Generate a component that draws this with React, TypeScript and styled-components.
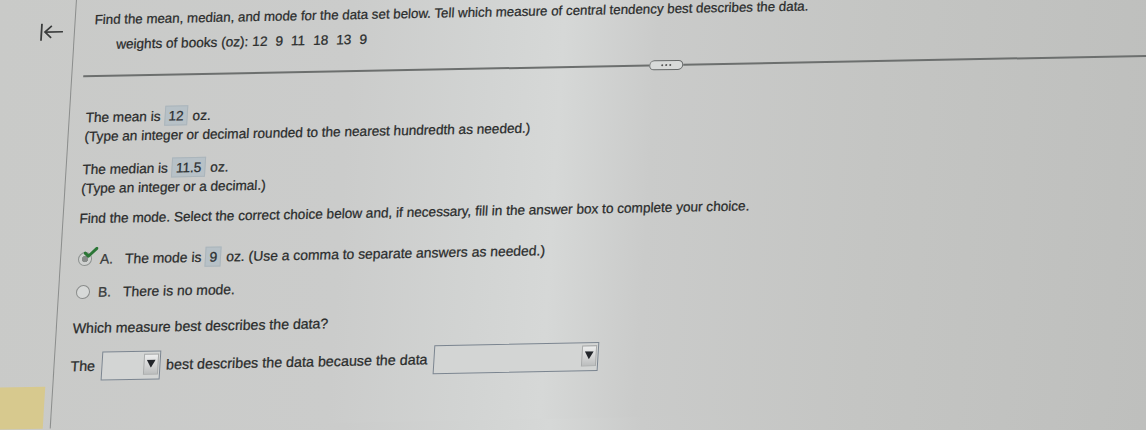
import styled, { createGlobalStyle, css } from "styled-components";

const screenGlare = css`
  background: linear-gradient(
    90deg,
    #c9cac8 0%,
    #cbcccb 30%,
    #d2d4d3 42%,
    #d6d8d7 48%,
    #cacbca 56%,
    #c4c5c3 75%,
    #bebfbd 100%
  );
`;

const GlobalStyle = createGlobalStyle`
  html, body {
    margin: 0;
    padding: 0;
    overflow: hidden;
    height: 100%;
    ${screenGlare}
  }
  body {
    font-family: "Liberation Sans", Arial, Helvetica, sans-serif;
    color: #2a2c2c;
  }
`;

// the reference is a photo of a monitor, so the whole screen is tilted a little
const Screen = styled.div`
  display: flex;
  width: 1180px;
  height: 430px;
  transform: skew(-3.5deg, -1.1deg);
  transform-origin: 0 0;
  font-size: 13.6px;
  -webkit-text-stroke: 0.25px currentColor;
  ${screenGlare}
`;

const Sidebar = styled.aside`
  width: 76px;
  flex-shrink: 0;
  display: flex;
  flex-direction: column;
  border-right: 1px solid #8b8d8c;
`;

const BackButton = styled.button`
  appearance: none;
  border: 0;
  background: none;
  padding: 0;
  margin: 24px 0 0 42px;
  width: 24px;
  height: 18px;
  color: #3a3c3c;
  display: flex;
  cursor: pointer;
`;

const YellowTab = styled.div`
  margin-top: auto;
  width: 69px;
  height: 42px;
  background: #d7c98e;
`;

const Main = styled.main`
  flex: 1;
  display: flex;
  flex-direction: column;
  padding-top: 14px;
`;

const Title = styled.p`
  margin: 0;
  padding-left: 19px;
  line-height: 16px;
  white-space: nowrap;
  font-size: 13.3px;
`;

const DataLine = styled.p`
  margin: 9px 0 0;
  padding-left: 42px;
  line-height: 16px;
  display: flex;
  align-items: center;
`;

const DataValues = styled.span`
  display: inline-flex;
  gap: 8px;
  margin-left: 4px;
`;

const Divider = styled.div`
  margin: 18px 0 0 11px;
  height: 10px;
  display: flex;
  align-items: center;
`;

const Rule = styled.div<{ $width?: number }>`
  height: 1.5px;
  background: #6c6f6e;
  flex: ${(p) => (p.$width ? `0 0 ${p.$width}px` : "1")};
`;

const MorePill = styled.button`
  appearance: none;
  width: 34px;
  height: 10px;
  padding: 0;
  border: 1.5px solid #676a6a;
  border-radius: 5px;
  background: #d8dad9;
  display: flex;
  align-items: center;
  justify-content: center;
  gap: 2px;
  box-sizing: border-box;
`;

const Dot = styled.span`
  width: 2px;
  height: 2px;
  border-radius: 50%;
  background: #555;
`;

const Content = styled.section`
  padding-left: 16px;
  display: flex;
  flex-direction: column;
`;

// text nearer the bottom of the photo is a touch larger (closer to the camera)
const Line = styled.div<{ $mt?: number; $near?: boolean }>`
  margin-top: ${(p) => p.$mt ?? 0}px;
  height: 14px;
  display: flex;
  align-items: center;
  white-space: nowrap;
  font-size: ${(p) => (p.$near ? "14.1px" : "inherit")};
`;

const AnswerBox = styled.span`
  display: inline-flex;
  align-items: center;
  justify-content: center;
  height: 20px;
  padding: 0 3px;
  margin: 0 5px 0 4px;
  box-sizing: border-box;
  background: #b7c1c7;
  border: 1px solid #abb5bb;
  color: #2c2f31;
`;

const OptionRow = styled.div<{ $mt: number }>`
  margin-top: ${(p) => p.$mt}px;
  height: 20px;
  display: flex;
  align-items: center;
  white-space: nowrap;
  font-size: 13.9px;
`;

const RadioWrap = styled.span`
  position: relative;
  width: 14px;
  height: 14px;
  margin: 0 8px 0 1px;
  flex-shrink: 0;
`;

const Radio = styled.span<{ $checked?: boolean }>`
  display: block;
  width: 14px;
  height: 14px;
  box-sizing: border-box;
  border-radius: 50%;
  border: 1.6px solid ${(p) => (p.$checked ? "#8e9290" : "#8a8c8b")};
  background: ${(p) =>
    p.$checked
      ? "radial-gradient(circle, #878b89 0 3px, #d0d2d1 3.5px)"
      : "#d7d9d8"};
`;

const CheckMark = styled.svg`
  position: absolute;
  left: 5px;
  top: -5px;
  width: 15px;
  height: 11px;
`;

const Letter = styled.span`
  width: 25px;
  color: #3a3c3c;
`;

const SentenceRow = styled.div`
  margin-top: 16px;
  height: 30px;
  display: flex;
  align-items: center;
  white-space: nowrap;
  font-size: 14.3px;
`;

const Select = styled.div<{ $width: number }>`
  width: ${(p) => p.$width}px;
  height: 29px;
  margin: 0 6px;
  box-sizing: border-box;
  border: 1.6px solid #7b8590;
  background: #d3d5d4;
  display: flex;
  justify-content: flex-end;
  align-items: flex-start;
  padding: 2px 1px 0 0;
`;

const SelectButton = styled.span`
  width: 15px;
  height: 21px;
  box-sizing: border-box;
  border: 1px solid #a9abab;
  background: linear-gradient(180deg, #eceded 0%, #d2d3d3 60%, #bcbebe 100%);
  display: flex;
  align-items: center;
  justify-content: center;
`;

const BackIcon = () => (
  <svg width="24" height="18" viewBox="0 0 24 18" fill="none">
    <path d="M1.5 0.5V17.5" stroke="currentColor" strokeWidth="1.8" />
    <path d="M23 9H5.5" stroke="currentColor" strokeWidth="1.7" />
    <path d="M11.5 3L5 9L11.5 15" stroke="currentColor" strokeWidth="1.7" />
  </svg>
);

const Caret = () => (
  <svg width="9" height="8" viewBox="0 0 9 8">
    <polygon points="0,0 9,0 4.5,8" fill="#23262b" />
  </svg>
);

const DropDown = ({ width }: { width: number }) => (
  <Select $width={width}>
    <SelectButton>
      <Caret />
    </SelectButton>
  </Select>
);

const weights = [12, 9, 11, 18, 13, 9];

export default function App() {
  return (
    <>
      <GlobalStyle />
      <Screen>
        <Sidebar>
          <BackButton type="button" aria-label="Back">
            <BackIcon />
          </BackButton>
          <YellowTab />
        </Sidebar>
        <Main>
          <Title>
            Find the mean, median, and mode for the data set below. Tell which
            measure of central tendency best describes the data.
          </Title>
          <DataLine>
            weights of books (oz):
            <DataValues>
              {weights.map((w, i) => (
                <span key={i}>{w}</span>
              ))}
            </DataValues>
          </DataLine>
          <Divider>
            <Rule $width={566} />
            <MorePill type="button" aria-label="More">
              <Dot />
              <Dot />
              <Dot />
            </MorePill>
            <Rule />
          </Divider>
          <Content>
            <Line $mt={29}>
              The mean is<AnswerBox>12</AnswerBox>oz.
            </Line>
            <Line $mt={5}>
              (Type an integer or decimal rounded to the nearest hundredth as
              needed.)
            </Line>
            <Line $mt={19}>
              The median is<AnswerBox>11.5</AnswerBox>oz.
            </Line>
            <Line $mt={5}>(Type an integer or a decimal.)</Line>
            <Line $mt={16}>
              Find the mode. Select the correct choice below and, if necessary,
              fill in the answer box to complete your choice.
            </Line>
            <OptionRow $mt={24}>
              <RadioWrap>
                <Radio $checked />
                <CheckMark viewBox="0 0 15 11">
                  <path
                    d="M1.8 6L5.2 9.2L13.2 1.5"
                    stroke="#2b7636"
                    strokeWidth="3"
                    fill="none"
                    strokeLinecap="round"
                    strokeLinejoin="round"
                  />
                </CheckMark>
              </RadioWrap>
              <Letter>A.</Letter>
              The mode is<AnswerBox>9</AnswerBox>oz. (Use a comma to separate
              answers as needed.)
            </OptionRow>
            <OptionRow $mt={13}>
              <RadioWrap>
                <Radio />
              </RadioWrap>
              <Letter>B.</Letter>
              There is no mode.
            </OptionRow>
            <Line $mt={19} $near>
              Which measure best describes the data?
            </Line>
            <SentenceRow>
              The
              <DropDown width={59} />
              best describes the data because the data
              <DropDown width={165} />
            </SentenceRow>
          </Content>
        </Main>
      </Screen>
    </>
  );
}
